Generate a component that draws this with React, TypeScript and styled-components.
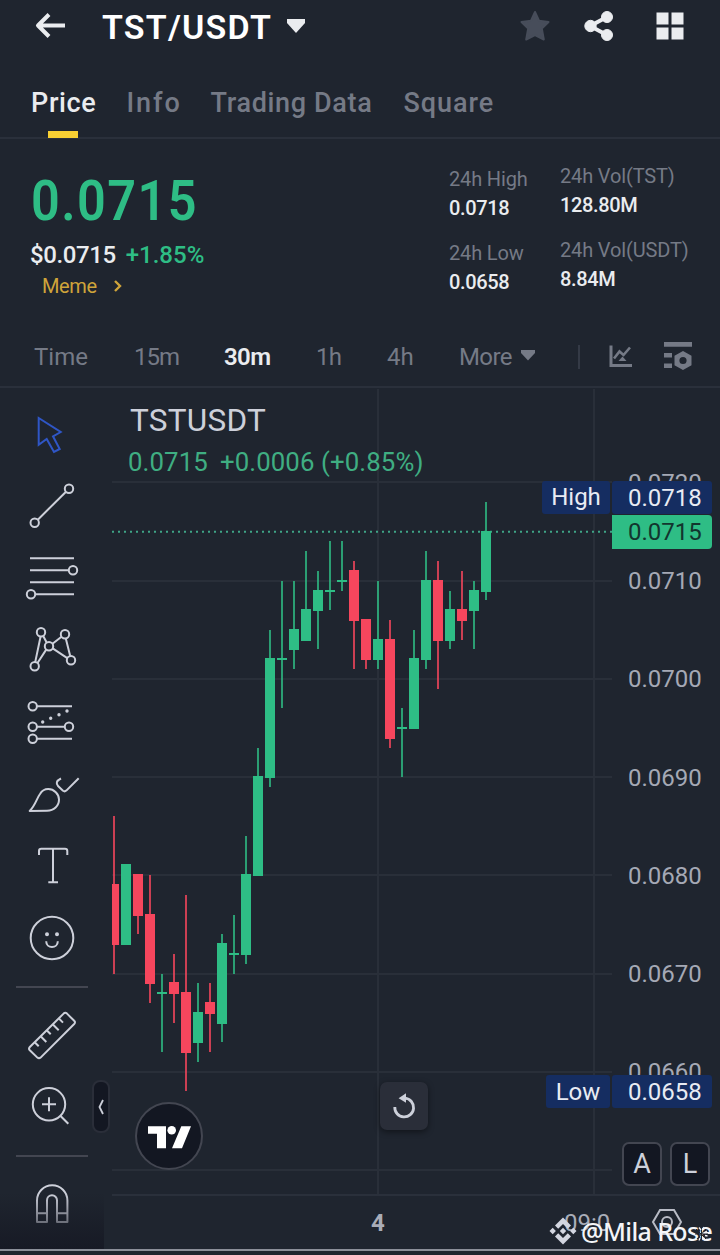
import React from 'react';
import styled, { createGlobalStyle } from 'styled-components';

const c = {
  bg: '#1f252f',
  line: '#2a303b',
  text: '#eaecef',
  muted: '#757a86',
  green: '#2ebd85',
  red: '#f6465d',
  tool: '#cdd0da',
  navy: '#152d61',
  ink: '#131722',
};

const Global = createGlobalStyle`
  *, *::before, *::after { box-sizing: border-box; }
  body { margin: 0; background: ${c.bg}; font-family: Roboto, "Liberation Sans", sans-serif; }
`;

const Page = styled.div`
  width: 720px;
  height: 1255px;
  overflow: hidden;
  position: relative;
  display: flex;
  flex-direction: column;
  background: ${c.bg};
  color: ${c.text};
`;

/* Header */
const Header = styled.header`
  display: flex;
  align-items: center;
  height: 56px;
  padding: 0 34px;
  flex: none;
`;
const Title = styled.h1`
  display: flex;
  align-items: center;
  margin: 0 0 2px 36px;
  font-size: 34px;
  line-height: 40px;
  font-weight: 600;
  letter-spacing: 1.2px;
  color: #fff;
  flex: 1;
  svg { margin: -2px 0 0 15px; }
`;
const Actions = styled.div`
  display: flex;
  align-items: center;
  gap: 34px;
  padding-bottom: 4px;
`;
const BackIcon = styled.svg`
  margin-bottom: 4px;
`;

const Tabs = styled.nav`
  display: flex;
  height: 83px;
  flex: none;
  padding-left: 31px;
  border-bottom: 2px solid ${c.line};
`;
const Tab = styled.div<{ $active?: boolean; $gap: number; $track: number }>`
  position: relative;
  margin-right: ${(p) => p.$gap}px;
  padding-top: 30.5px;
  font-size: 27px;
  line-height: 32px;
  font-weight: 500;
  letter-spacing: ${(p) => p.$track}px;
  color: ${(p) => (p.$active ? c.text : c.muted)};
  white-space: nowrap;
  &::after {
    content: '';
    display: ${(p) => (p.$active ? 'block' : 'none')};
    position: absolute;
    left: 17px;
    bottom: -1px;
    width: 30px;
    height: 7px;
    background: #f8d033;
  }
`;

/* Ticker summary */
const Summary = styled.section`
  display: flex;
  height: 189px;
  flex: none;
  padding: 28px 0 0 31px;
`;
const PriceBlock = styled.div`
  width: 418px;
`;
const LastPrice = styled.div`
  width: max-content;
  font-size: 56px;
  line-height: 68px;
  font-weight: 600;
  letter-spacing: 1.6px;
  color: ${c.green};
  transform: scaleX(0.9);
  transform-origin: 0 50%;
`;
const FiatRow = styled.div`
  display: flex;
  gap: 10px;
  margin: 5px 0 0 -1px;
  font-size: 24px;
  line-height: 30px;
  letter-spacing: -0.4px;
  font-weight: 500;
  span { color: ${c.green}; letter-spacing: 0; }
`;
const Tag = styled.div`
  display: flex;
  align-items: center;
  gap: 16px;
  margin: 1px 0 0 11px;
  font-size: 20px;
  line-height: 30px;
  letter-spacing: -0.4px;
  color: #cfa43a;
`;
const StatColumn = styled.div<{ $width: number; $shift: number }>`
  width: ${(p) => p.$width}px;
  margin-top: ${(p) => p.$shift}px;
`;
const Stat = styled.div`
  height: 74px;
  white-space: nowrap;
`;
const StatLabel = styled.div`
  font-size: 20px;
  line-height: 28px;
  letter-spacing: -0.15px;
  color: ${c.muted};
`;
const StatValue = styled.div`
  font-size: 20px;
  line-height: 30px;
  font-weight: 500;
  letter-spacing: -0.35px;
`;

/* Interval bar */
const Intervals = styled.div`
  display: flex;
  align-items: center;
  height: 60px;
  flex: none;
  padding: 0 0 1px 34px;
  border-bottom: 2px solid ${c.line};
`;
const Interval = styled.div<{ $active?: boolean; $width: number; $track?: number }>`
  width: ${(p) => p.$width}px;
  display: flex;
  align-items: center;
  gap: 9px;
  font-size: 24px;
  line-height: 30px;
  letter-spacing: ${(p) => p.$track ?? 0}px;
  font-weight: ${(p) => (p.$active ? 600 : 400)};
  color: ${(p) => (p.$active ? c.text : c.muted)};
  svg { margin-top: -2px; }
`;
const BarDivider = styled.div`
  width: 2px;
  height: 24px;
  margin-right: 28px;
  background: #343a46;
`;
const BarIcon = styled.svg<{ $gap: number }>`
  margin: -1px ${(p) => p.$gap}px 0 0;
`;

/* Chart */
const Workspace = styled.main`
  display: flex;
  height: 861px;
  flex: none;
  padding-top: 1px;
`;
const Toolbar = styled.aside`
  position: relative;
  width: 112px;
  padding-top: 9px;
`;
const ToolIcon = styled.svg<{ $active?: boolean }>`
  display: block;
  width: 104px;
  height: 72px;
  fill: none;
  stroke: ${(p) => (p.$active ? '#2f56c6' : c.tool)};
  stroke-width: 2;
`;
const ToolDivider = styled.div`
  width: 72px;
  height: 2px;
  margin: 12px 0 11px 16px;
  background: #434651;
`;
const ToolFade = styled.div`
  position: absolute;
  left: 0;
  bottom: 0;
  width: 104px;
  height: 56px;
  background: linear-gradient(rgba(22, 25, 35, 0), #171a25);
`;
const Collapse = styled.button`
  position: absolute;
  left: 92px;
  top: 691px;
  width: 18px;
  height: 53px;
  padding: 0;
  border: 2px solid #2a2e39;
  border-radius: 8px;
  background: ${c.ink};
  display: grid;
  place-items: center;
`;
const ChartArea = styled.div`
  position: relative;
  width: 500px;
`;
const Plot = styled.svg`
  display: block;
`;
const Legend = styled.div`
  position: absolute;
  left: 18px;
  top: 13px;
  white-space: nowrap;
`;
const LegendName = styled.div`
  font-size: 31.5px;
  line-height: 37px;
  letter-spacing: 0.25px;
  color: ${c.tool};
`;
const LegendValues = styled.div`
  display: flex;
  gap: 12px;
  margin: 8px 0 0 -2px;
  font-size: 25.8px;
  line-height: 30px;
  letter-spacing: 0.1px;
  color: #3fae82;
`;
const Marker = styled.div<{ $top: number; $left: number; $width: number; $line?: number }>`
  position: absolute;
  left: ${(p) => p.$left}px;
  top: ${(p) => p.$top}px;
  width: ${(p) => p.$width}px;
  height: 33px;
  border-radius: 3px;
  background: ${c.navy};
  color: #e8ebf3;
  font-size: 24px;
  line-height: ${(p) => p.$line ?? 33}px;
  text-align: center;
`;
const RoundLogo = styled.div`
  position: absolute;
  left: 23px;
  top: 713px;
  width: 68px;
  height: 68px;
  border: 2px solid #434651;
  border-radius: 50%;
  background: ${c.ink};
`;
const ResetButton = styled.button`
  position: absolute;
  left: 268px;
  top: 693px;
  width: 48px;
  height: 48px;
  padding: 0;
  border: 0;
  border-radius: 7px;
  background: #2a2e39;
  box-shadow: 0 2px 6px rgba(0, 0, 0, 0.45);
`;
const TimeAxis = styled.div`
  position: absolute;
  left: 0;
  right: 0;
  top: 805px;
  height: 55px;
  border-top: 2px solid ${c.line};
`;
const TimeLabel = styled.span<{ $left: number; $bold?: boolean }>`
  position: absolute;
  left: ${(p) => p.$left}px;
  top: 12px;
  font-size: 24px;
  line-height: 30px;
  font-weight: ${(p) => (p.$bold ? 700 : 400)};
  color: #a9adb8;
`;
const PriceAxis = styled.div`
  position: relative;
  width: 108px;
  padding-top: 45px;
`;
const AxisLabel = styled.div`
  height: 98.2px;
  padding-left: 16px;
  font-size: 24px;
  line-height: 98px;
  color: #a5a9b5;
`;
const AxisTag = styled.div<{ $top: number; $live?: boolean }>`
  position: absolute;
  left: 0;
  top: ${(p) => p.$top}px;
  width: 100px;
  height: ${(p) => (p.$live ? 34 : 33)}px;
  padding-left: 16px;
  border-radius: ${(p) => (p.$live ? '0 4px 4px 0' : '3px')};
  background: ${(p) => (p.$live ? c.green : c.navy)};
  color: ${(p) => (p.$live ? '#12352e' : '#e8ebf3')};
  font-size: 24px;
  line-height: 35px;
`;
const ScaleButtons = styled.div`
  position: absolute;
  left: 10px;
  top: 753px;
  display: flex;
  gap: 8px;
`;
const ScaleButton = styled.button`
  width: 40px;
  height: 44px;
  padding: 0;
  border: 2px solid #434651;
  border-radius: 7px;
  background: ${c.ink};
  color: ${c.tool};
  font: 400 27px/38px Roboto, sans-serif;
`;
const AxisCorner = styled.div`
  position: absolute;
  left: 0;
  right: 0;
  top: 805px;
  height: 55px;
  border-top: 2px solid ${c.line};
  svg { position: absolute; left: 38px; top: 8px; }
`;
const BottomRule = styled.div`
  height: 2px;
  background: #8b8f99;
`;
const Watermark = styled.div`
  position: absolute;
  left: 549px;
  top: 1214px;
  display: flex;
  align-items: center;
  font-family: 'Noto Sans', sans-serif;
  font-size: 25px;
  line-height: 34px;
  font-weight: 500;
  color: #f4f5f8;
  white-space: nowrap;
  letter-spacing: -0.6px;
  svg { margin-right: 4px; }
`;
const Sparkle = styled.svg`
  position: absolute;
  right: -1px;
  top: 12px;
`;

// [open, close, high, low] in units of 0.0001 USDT
const candles: [number, number, number, number][] = [
  [679, 673, 686, 670], [673, 681, 681, 673], [680, 676, 680, 674], [676, 669, 680, 667],
  [668, 668, 670, 662], [669, 668, 672, 665], [668, 662, 678, 658], [663, 666, 669, 661],
  [667, 666, 669, 662], [665, 673, 674, 663], [672, 672, 676, 670], [672, 680, 684, 671],
  [680, 690, 693, 680], [690, 702, 705, 689], [702, 702, 710, 697], [703, 705, 710, 701],
  [704, 707, 713, 704], [707, 709, 711, 703], [709, 709, 714, 707], [710, 710, 714, 709],
  [711, 706, 712, 701], [706, 702, 706, 701], [702, 704, 710, 701], [704, 694, 706, 693],
  [695, 695, 697, 690], [695, 702, 705, 695], [702, 710, 713, 701], [710, 704, 712, 699],
  [704, 707, 709, 703], [707, 706, 711, 704], [707, 709, 710, 703], [709, 715, 718, 708],
];
const y = (price: number) => Math.round(191.7 + (710 - price) * 9.82);
const levels = [720, 710, 700, 690, 680, 670, 660, 650];

const Candle = ({ index, data }: { index: number; data: [number, number, number, number] }) => {
  const [open, close, high, low] = data;
  const x = 2 + index * 12;
  const up = close >= open;
  const top = y(Math.max(open, close)) - 1;
  const bottom = y(Math.min(open, close)) + 1;
  return (
    <g fill={up ? c.green : c.red}>
      <rect x={x - 1} y={y(high)} width={2} height={y(low) - y(high)} opacity={0.8} />
      <rect x={x - 5} y={top} width={10} height={bottom - top} />
    </g>
  );
};

const Tool = ({ active, children }: { active?: boolean; children: React.ReactNode }) => (
  <ToolIcon viewBox="0 -36 104 72" $active={active} strokeLinejoin="round">{children}</ToolIcon>
);
const Dot = ({ x, y: cy }: { x: number; y: number }) => <circle cx={x} cy={cy} r={4.2} />;

export default function App() {
  return (
    <Page>
      <Global />
      <Header>
        <BackIcon width="32" height="28" viewBox="0 0 32 28" fill="none" stroke={c.text} strokeWidth="4">
          <path d="M31 13.5H4M15 2.5L4 13.5L15 24.5" strokeLinejoin="round" />
        </BackIcon>
        <Title>
          TST/USDT
          <svg width="18" height="15" viewBox="0 0 18 15" fill={c.text}><path d="M0 0H18V4L9 14L0 4Z" /></svg>
        </Title>
        <Actions>
          <svg width="30" height="32" viewBox="0 0 30 32" fill="#474d5a" stroke="#474d5a" strokeWidth="2" strokeLinejoin="round">
            <path d="M15 2L19 10.7L28.5 12L21.8 18.5L23.8 29.5L15 25L6.2 29.5L8.2 18.5L1.5 12L11 10.7Z" />
          </svg>
          <svg width="30" height="32" viewBox="0 0 30 32" fill={c.text} stroke={c.text}>
            <path d="M6 16L23 7M6 16L23 25" strokeWidth="4" fill="none" />
            <circle cx="6.5" cy="16" r="5.7" /><circle cx="23" cy="7" r="5.5" /><circle cx="23" cy="25" r="5.5" />
          </svg>
          <svg width="38" height="32" viewBox="0 0 38 32" fill={c.text}>
            <path d="M8.5 2.5h12v12h-12zM23.5 2.5h12v12h-12zM8.5 17.5h12v12h-12zM23.5 17.5h12v12h-12z" />
          </svg>
        </Actions>
      </Header>
      <Tabs>
        <Tab $active $gap={30} $track={0.65}>Price</Tab>
        <Tab $gap={29} $track={1.9}>Info</Tab>
        <Tab $gap={31} $track={0.65}>Trading Data</Tab>
        <Tab $gap={0} $track={0.95}>Square</Tab>
      </Tabs>
      <Summary>
        <PriceBlock>
          <LastPrice>0.0715</LastPrice>
          <FiatRow>$0.0715<span>+1.85%</span></FiatRow>
          <Tag>
            Meme
            <svg width="9" height="12" viewBox="0 0 9 12" fill="none" stroke="#cfa43a" strokeWidth="2.4"><path d="M2 1L7 6L2 11" /></svg>
          </Tag>
        </PriceBlock>
        <StatColumn $width={111} $shift={-2}>
          <Stat><StatLabel>24h High</StatLabel><StatValue>0.0718</StatValue></Stat>
          <Stat><StatLabel>24h Low</StatLabel><StatValue>0.0658</StatValue></Stat>
        </StatColumn>
        <StatColumn $width={150} $shift={-5}>
          <Stat><StatLabel>24h Vol(TST)</StatLabel><StatValue>128.80M</StatValue></Stat>
          <Stat><StatLabel>24h Vol(USDT)</StatLabel><StatValue>8.84M</StatValue></Stat>
        </StatColumn>
      </Summary>
      <Intervals>
        <Interval $width={100}>Time</Interval>
        <Interval $width={90} $track={-1}>15m</Interval>
        <Interval $width={92} $active $track={-0.6}>30m</Interval>
        <Interval $width={71} $track={-0.8}>1h</Interval>
        <Interval $width={72}>4h</Interval>
        <Interval $width={119} $track={-0.6}>
          More
          <svg width="14" height="11" viewBox="0 0 14 11" fill={c.muted}><path d="M0 0H14V3L7 10.5L0 3Z" /></svg>
        </Interval>
        <BarDivider />
        <BarIcon $gap={31} width="24" height="24" viewBox="0 0 24 24" fill="none" stroke={c.muted} strokeWidth="3">
          <path d="M3 1.5V21.5H24" />
          <path d="M6 14.5L11.5 7.5L15.5 11L22 3.5" strokeWidth="2.6" />
          <path d="M14.5 12.5L18.5 17H10.5Z" fill={c.muted} stroke="none" />
        </BarIcon>
        <BarIcon $gap={0} width="30" height="30" viewBox="0 0 30 30" fill={c.muted}>
          <path d="M1 1h28v4.7H1zM1 12h8v4.5H1zM1 22.5h8v4.5H1z" />
          <path fillRule="evenodd" d="M20 10L28.5 14.7V24.3L20 29L11.5 24.3V14.7ZM20 15.9A3.6 3.6 0 1 0 20 23.1A3.6 3.6 0 1 0 20 15.9Z" />
        </BarIcon>
      </Intervals>
      <Workspace>
        <Toolbar>
          <Tool active>
            <path d="M38.7 -16L60.7 -2L53 2.3L59.7 15L54 18L46.7 5L38.7 10.7Z" strokeLinejoin="miter" />
          </Tool>
          <Tool>
            <Dot x={34.7} y={16.7} /><Dot x={69} y={-17.3} />
            <path d="M37.8 13.7L66 -14.3" />
          </Tool>
          <Tool>
            <path d="M30 -19.7H74M30 -7.7H69M30 4.3H74M35 16.3H74" />
            <Dot x={73} y={-7.7} /><Dot x={31} y={16.3} />
          </Tool>
          <Tool>
            <path d="M40.6 -13.5L35.2 12.1M43.2 -14L46.8 -7.2M37.5 13L46.2 -0.4M52.5 -6.3L61.5 -13.2M65.8 -11.5L70.2 6.1M52.7 -1.6L67.3 8.2" />
            <Dot x={41} y={-17.7} /><Dot x={65} y={-15.7} /><Dot x={49} y={-3.7} /><Dot x={34.7} y={16.3} /><Dot x={71} y={10.3} />
          </Tool>
          <Tool>
            <path d="M37 -15.7H72M37 4.7H65M37 16.7H72" />
            <Dot x={32.7} y={-15.7} /><Dot x={32.7} y={4.7} /><Dot x={69} y={4.7} /><Dot x={32.7} y={16.7} />
            <path d="M42.7 0h.01M50.7 -3.7h.01M59 -7.3h.01M67 -11h.01" strokeWidth="3.4" strokeLinecap="round" />
          </Tool>
          <Tool>
            <path d="M29.7 17C35 12 37 4 40 0C42 -3.5 45 -5 48.3 -5C54 -5 59 0 59 5.5C59 12 54 16.7 47 16.7Z" />
            <path d="M61 -15.5C56 -13 56 -10.5 58 -8L63 -3.2Q64.7 -2 66.3 -3.4L78.7 -15.7" />
          </Tool>
          <Tool>
            <path d="M39 -11V-15Q39 -17.3 41.3 -17.3H65Q67.3 -17.3 67.3 -15V-11M53 -17V16.3M48.3 16.3H58" />
          </Tool>
          <Tool>
            <circle cx="52" cy="0" r="21.3" />
            <path d="M46.2 3.2C46.2 11 57.8 11 57.8 3.2" />
            <path d="M47 -3.7h.01M57 -3.7h.01" strokeWidth="4" strokeLinecap="round" />
          </Tool>
          <ToolDivider />
          <Tool>
            <path d="M63.6 -21.4Q65.3 -23 67 -21.4L74.2 -14.2Q75.8 -12.7 74.2 -11L40.6 22.6Q39 24 37.4 22.6L29.8 15.2Q28.3 13.7 29.8 12Z" />
            <path d="M34.7 7.3L38.7 11.3M40.7 1.3L46.3 7M46.7 -4.7L50.7 -0.7M52.7 -10.7L58.7 -4.7M58.7 -16.7L63 -12.4" />
          </Tool>
          <Tool>
            <circle cx="49" cy="-2.7" r="16.2" />
            <path d="M42 -2.7H56M49 -9.7V4.3M60.3 8.7L68.3 16.7" />
          </Tool>
          <ToolDivider />
          <Tool>
            <path d="M37 18V-3.5A15.2 15.2 0 0 1 67.4 -3.5V18H57V-3.7A5 5 0 0 0 47 -3.7V18ZM37 9.3H47M57 9.3H67" />
          </Tool>
          <ToolFade />
          <Collapse>
            <svg width="8" height="16" viewBox="0 0 8 16" fill="none" stroke={c.tool} strokeWidth="1.8"><path d="M6 1L2.5 8L6 15" /></svg>
          </Collapse>
        </Toolbar>
        <ChartArea>
          <Plot width="500" height="806" viewBox="0 0 500 806">
            <g fill="#292f39">
              {levels.map((p) => <rect key={p} x="0" y={y(p) - 1} width="500" height="2" />)}
              <rect x="265" y="0" width="2" height="805" />
              <rect x="481" y="0" width="2" height="805" />
            </g>
            <path d="M0 142.7H500" stroke="#3fa587" strokeWidth="2" strokeDasharray="2 4" />
            {candles.map((d, i) => <Candle key={i} index={i} data={d} />)}
          </Plot>
          <Legend>
            <LegendName>TSTUSDT</LegendName>
            <LegendValues><span>0.0715</span><span>+0.0006 (+0.85%)</span></LegendValues>
          </Legend>
          <Marker $left={430} $top={92} $width={68}>High</Marker>
          <Marker $left={434} $top={686} $width={64} $line={35}>Low</Marker>
          <RoundLogo>
            <svg width="64" height="64" viewBox="137 1103.5 64 64" fill="#fff">
              <path d="M148 1125.7H166V1147.7H157V1133.3H148ZM181.3 1125.7H191L182 1147.7H172Z" />
              <circle cx="171.7" cy="1129.7" r="4.3" />
            </svg>
          </RoundLogo>
          <ResetButton>
            <svg width="48" height="48" viewBox="0 0 48 48" fill="none" stroke={c.tool} strokeWidth="2.8">
              <path d="M14.8 25A9.4 9.4 0 1 0 25 16.2" />
              <path d="M26 11.3L18.6 16.3L26 20.8Z" fill={c.tool} stroke="none" />
            </svg>
          </ResetButton>
          <TimeAxis>
            <TimeLabel $left={259} $bold>4</TimeLabel>
            <TimeLabel $left={452}>09:0</TimeLabel>
          </TimeAxis>
        </ChartArea>
        <PriceAxis>
          {levels.slice(0, 7).map((p) => <AxisLabel key={p}>{(p / 10000).toFixed(4)}</AxisLabel>)}
          <AxisTag $top={92}>0.0718</AxisTag>
          <AxisTag $top={126} $live>0.0715</AxisTag>
          <AxisTag $top={686}>0.0658</AxisTag>
          <ScaleButtons>
            <ScaleButton>A</ScaleButton>
            <ScaleButton>L</ScaleButton>
          </ScaleButtons>
          <AxisCorner>
            <svg width="34" height="34" viewBox="0 0 34 34" fill="none" stroke="#b9bcc6" strokeWidth="2">
              <path d="M10 6H24L31 18L24 30H10L3 18Z" /><circle cx="17" cy="18" r="5" />
            </svg>
          </AxisCorner>
        </PriceAxis>
      </Workspace>
      <BottomRule />
      <Watermark>
        <svg width="28" height="28" viewBox="0 0 28 28" fill="#d3d6e0">
          <path d="M14 0.5L22 8.5L18.8 11.7L14 6.9L9.2 11.7L6 8.5ZM14 27.5L22 19.5L18.8 16.3L14 21.1L9.2 16.3L6 19.5ZM14 10.8L17.2 14L14 17.2L10.8 14ZM3.7 10.8L6.9 14L3.7 17.2L0.5 14ZM24.3 10.8L27.5 14L24.3 17.2L21.1 14Z" />
        </svg>
        @Mila Rose
        <Sparkle width="15" height="16" viewBox="0 0 15 16" fill="none" stroke="#f4f5f8" strokeWidth="1.3">
          <path d="M2 3L12 13M12 3L3 13M7.5 1V15M1 8H14" stroke={c.bg} strokeWidth="1" />
          <path d="M5 1.5L7 4M10 1L9 4M13 5L10.5 6.5M13.5 10L11 9.5M11 14.5L9.5 11.5M5 14.5L6 12" />
        </Sparkle>
      </Watermark>
    </Page>
  );
}
